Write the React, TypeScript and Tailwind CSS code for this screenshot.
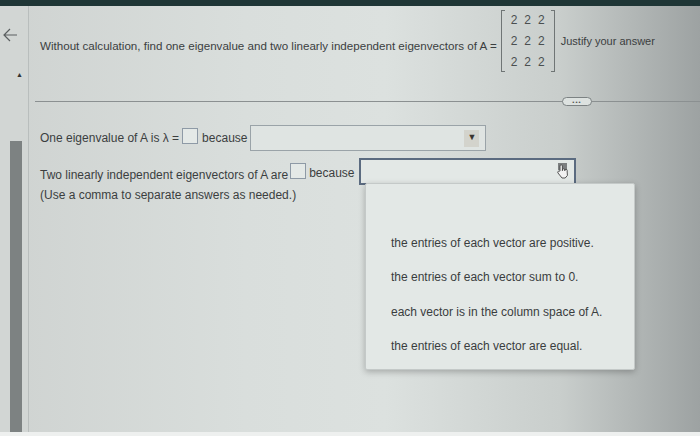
import { ReactNode } from "react";

const font = { fontFamily: '"Liberation Sans", Arial, sans-serif' };

function AnswerBox() {
  return <span className="inline-block h-[16px] w-[16px] border border-[#8e9aa6] bg-[#e4e9e7]" />;
}

function Matrix({ rows }: { rows: number[][] }) {
  return (
    <div className="flex h-[62px] items-stretch">
      <div className="w-[4px] border-y border-l border-[#6f7575]" />
      <div className="flex flex-col justify-between px-[6px] py-[3px]">
        {rows.map((row, i) => (
          <div key={i} className="flex gap-[7px] text-[12px] leading-[14px] text-[#4a4f50]">
            {row.map((v, j) => (
              <span key={j}>{v}</span>
            ))}
          </div>
        ))}
      </div>
      <div className="w-[4px] border-y border-r border-[#6f7575]" />
    </div>
  );
}

function Choice({ children }: { children: ReactNode }) {
  return <li className="flex h-[34.5px] items-center pl-[25px]">{children}</li>;
}

export default function App() {
  return (
    <div
      className="flex h-[436px] w-[700px] flex-col overflow-hidden bg-[linear-gradient(90deg,#cfd3d1_0%,#d9dedc_35%,#dce1df_55%,#c9cecc_80%,#9da2a2_100%)] text-[#3b3e3f]"
      style={font}
    >
      <div className="h-[6px] bg-[#1f3636]" />
      <div className="flex flex-1">
        {/* left rail */}
        <div className="flex w-[29px] flex-col border-r border-[#b9bebd] bg-[#d2d6d4]">
          <svg width="16" height="14" viewBox="0 0 16 14" className="ml-[2px] mt-[22px]">
            <path d="M15 7 H2 M8 1 L2 7 L8 13" fill="none" stroke="#5a5f60" strokeWidth="1.2" />
          </svg>
          <div className="mt-[29px] pl-[16px] text-[7px] leading-[8px] text-[#333]">▲</div>
          <div className="ml-[10px] mt-[62px] w-[12px] flex-1 bg-[#7d8282]" />
        </div>

        {/* content */}
        <div className="relative flex flex-1 flex-col">
          <div className="mt-[4px] flex items-center pl-[11px]">
            <span className="mt-[10px] text-[11.6px]">
              Without calculation, find one eigenvalue and two linearly independent eigenvectors of A =
            </span>
            <div className="ml-[4px]">
              <Matrix
                rows={[
                  [2, 2, 2],
                  [2, 2, 2],
                  [2, 2, 2],
                ]}
              />
            </div>
            <span className="ml-[6px] text-[11px]">Justify your answer</span>
          </div>

          <div className="relative ml-[6px] mt-[29px] border-t border-[#8b9091]">
            <div className="absolute left-[527px] top-[-5px] flex h-[9px] w-[30px] items-center justify-center rounded-full border border-[#7c8283] bg-[#dde2e0] text-[6px] leading-none tracking-[1px] text-[#555]">
              •••
            </div>
          </div>

          <div className="mt-[23px] flex items-center pl-[11px] text-[12px]">
            <span>One eigenvalue of A is λ =</span>
            <span className="ml-[3px]">
              <AnswerBox />
            </span>
            <span className="ml-[4px]">because</span>
            <div className="ml-[3px] flex h-[26px] w-[236px] items-center justify-end border border-[#9aa3a8] bg-[#dfe4e2] pr-[6px]">
              <span className="flex h-[17px] w-[15px] items-center justify-center bg-[#d3d3cc] text-[9px] text-[#3a352f]">
                ▼
              </span>
            </div>
          </div>

          <div className="mt-[7px] flex items-center pl-[11px] text-[12px]">
            <span className="mt-[6px]">Two linearly independent eigenvectors of A are</span>
            <span className="ml-[2px] mt-[4px]">
              <AnswerBox />
            </span>
            <span className="ml-[3px] mt-[2px]">because</span>
            <div className="ml-[4px] flex h-[27px] w-[217px] items-center justify-end border-2 border-[#5b6b80] bg-[#e3e8e6] pr-[3px]">
              <svg width="16" height="20" viewBox="0 0 16 20">
                <rect x="3" y="1" width="9" height="7" fill="#7c7f80" />
                <path
                  d="M5 9 V4 a1.2 1.2 0 0 1 2.4 0 V9 M7.4 8 a1.2 1.2 0 0 1 2.4 0 V9 M9.8 8.5 a1.2 1.2 0 0 1 2.4 0 V10 a5 5 0 0 1 -2 6 H7 L3 11 a1.2 1.2 0 0 1 2 -1.5"
                  fill="#f2f2f2"
                  stroke="#444"
                  strokeWidth="0.9"
                />
              </svg>
            </div>
          </div>
          <div className="mt-[1px] pl-[11px] text-[12px]">(Use a comma to separate answers as needed.)</div>

          {/* open dropdown list */}
          <div className="absolute left-[336px] top-[177px] h-[187px] w-[270px] rounded-[2px] border border-[#c4c9c8] bg-[#e3e8e6] shadow-[0_2px_6px_rgba(0,0,0,0.25)]">
            <ul className="pt-[7px] text-[12px] text-[#3a3d3e]">
              <Choice>{""}</Choice>
              <Choice>the entries of each vector are positive.</Choice>
              <Choice>the entries of each vector sum to 0.</Choice>
              <Choice>each vector is in the column space of A.</Choice>
              <Choice>the entries of each vector are equal.</Choice>
            </ul>
          </div>
        </div>
      </div>
      <div className="h-[4px] bg-[#eef0ef]" />
    </div>
  );
}
